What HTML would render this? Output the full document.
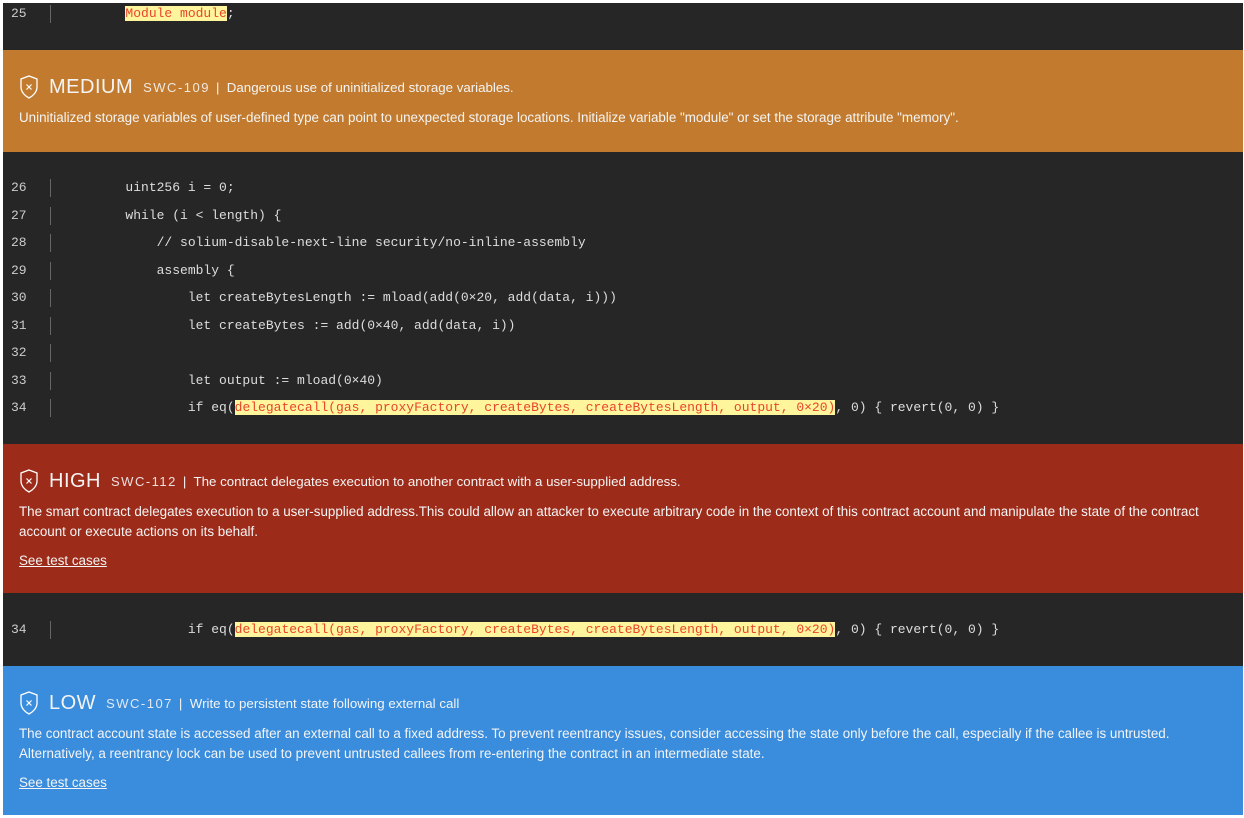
<!DOCTYPE html>
<html><head><meta charset="utf-8"><style>
*{margin:0;padding:0;box-sizing:border-box}
body{width:1244px;height:818px;background:#fff;position:relative;overflow:hidden;font-family:"Liberation Sans",sans-serif}
.wrap{position:absolute;left:3px;top:3px;width:1240px;height:812px;background:#262626}
.code{position:absolute;left:0;width:1240px;background:#262626;font-family:"Liberation Mono",monospace;font-size:13px;color:#ddd}
.ln{position:absolute;left:0;height:20px;width:1240px;line-height:20px}
.ln .n{position:absolute;left:8px;color:#ccc}
.ln .s{position:absolute;left:47px;top:1px;width:1px;height:18px;background:#666}
.ln .c{position:absolute;left:60px;white-space:pre}
.hl{background:#fff59d;color:#e8452c}
.box{position:absolute;left:0;width:1240px;color:#f4f4f4}
.t{position:absolute;left:16px;display:flex;align-items:center;white-space:nowrap}
.t svg{margin-right:10px}
.sev{font-size:20px;font-weight:300;letter-spacing:.5px;margin-right:10px}
.swc{font-size:13px;letter-spacing:1.5px;margin-right:6px;opacity:.9}
.ttl{font-size:13.3px}
.d{position:absolute;left:16px;width:1200px;font-size:13.4px;line-height:19.5px}
.a{position:absolute;left:16px;font-size:13.4px;text-decoration:underline}
</style></head><body><div class="wrap">
<div class="code" style="top:0;height:47px">
<div class="ln" style="top:1px"><span class="n">25</span><span class="s"></span><span class="c">        <span class="hl">Module module</span>;</span></div>
</div>
<div class="box" style="top:47px;height:102px;background:#c27b2e">
<div class="t" style="top:25px"><svg width="20" height="24" viewBox="0 0 20 24"><path d="M10 1 L18 4 V12 C18 17 14 21 10 23 C6 21 2 17 2 12 V4 Z" fill="none" stroke="#fff" stroke-width="1.3"/><path d="M7.5 9.5 L12.5 14.5 M12.5 9.5 L7.5 14.5" stroke="#fff" stroke-width="1.2"/></svg><span class="sev">MEDIUM</span><span class="swc">SWC-109</span><span class="ttl">|&nbsp; Dangerous use of uninitialized storage variables.</span></div>
<div class="d" style="top:58px">Uninitialized storage variables of user-defined type can point to unexpected storage locations. Initialize variable "module" or set the storage attribute "memory".</div>
</div>
<div class="code" style="top:149px;height:292px">
<div class="ln" style="top:26px"><span class="n">26</span><span class="s"></span><span class="c">        uint256 i = 0;</span></div>
<div class="ln" style="top:53.5px"><span class="n">27</span><span class="s"></span><span class="c">        while (i &lt; length) {</span></div>
<div class="ln" style="top:81px"><span class="n">28</span><span class="s"></span><span class="c">            // solium-disable-next-line security/no-inline-assembly</span></div>
<div class="ln" style="top:108.5px"><span class="n">29</span><span class="s"></span><span class="c">            assembly {</span></div>
<div class="ln" style="top:136px"><span class="n">30</span><span class="s"></span><span class="c">                let createBytesLength := mload(add(0×20, add(data, i)))</span></div>
<div class="ln" style="top:163.5px"><span class="n">31</span><span class="s"></span><span class="c">                let createBytes := add(0×40, add(data, i))</span></div>
<div class="ln" style="top:191px"><span class="n">32</span><span class="s"></span><span class="c"> </span></div>
<div class="ln" style="top:218.5px"><span class="n">33</span><span class="s"></span><span class="c">                let output := mload(0×40)</span></div>
<div class="ln" style="top:246px"><span class="n">34</span><span class="s"></span><span class="c">                if eq(<span class="hl">delegatecall(gas, proxyFactory, createBytes, createBytesLength, output, 0×20)</span>, 0) { revert(0, 0) }</span></div>
</div>
<div class="box" style="top:441px;height:149px;background:#9d2b19">
<div class="t" style="top:25px"><svg width="20" height="24" viewBox="0 0 20 24"><path d="M10 1 L18 4 V12 C18 17 14 21 10 23 C6 21 2 17 2 12 V4 Z" fill="none" stroke="#fff" stroke-width="1.3"/><path d="M7.5 9.5 L12.5 14.5 M12.5 9.5 L7.5 14.5" stroke="#fff" stroke-width="1.2"/></svg><span class="sev">HIGH</span><span class="swc">SWC-112</span><span class="ttl">|&nbsp; The contract delegates execution to another contract with a user-supplied address.</span></div>
<div class="d" style="top:58px">The smart contract delegates execution to a user-supplied address.This could allow an attacker to execute arbitrary code in the context of this contract account and manipulate the state of the contract account or execute actions on its behalf.</div>
<div class="a" style="top:109px">See test cases</div>
</div>
<div class="code" style="top:590px;height:73px">
<div class="ln" style="top:27px"><span class="n">34</span><span class="s"></span><span class="c">                if eq(<span class="hl">delegatecall(gas, proxyFactory, createBytes, createBytesLength, output, 0×20)</span>, 0) { revert(0, 0) }</span></div>
</div>
<div class="box" style="top:663px;height:149px;background:#3a8ddd">
<div class="t" style="top:25px"><svg width="20" height="24" viewBox="0 0 20 24"><path d="M10 1 L18 4 V12 C18 17 14 21 10 23 C6 21 2 17 2 12 V4 Z" fill="none" stroke="#fff" stroke-width="1.3"/><path d="M7.5 9.5 L12.5 14.5 M12.5 9.5 L7.5 14.5" stroke="#fff" stroke-width="1.2"/></svg><span class="sev">LOW</span><span class="swc">SWC-107</span><span class="ttl">|&nbsp; Write to persistent state following external call</span></div>
<div class="d" style="top:58px">The contract account state is accessed after an external call to a fixed address. To prevent reentrancy issues, consider accessing the state only before the call, especially if the callee is untrusted. Alternatively, a reentrancy lock can be used to prevent untrusted callees from re-entering the contract in an intermediate state.</div>
<div class="a" style="top:109px">See test cases</div>
</div>
</div></body></html>
